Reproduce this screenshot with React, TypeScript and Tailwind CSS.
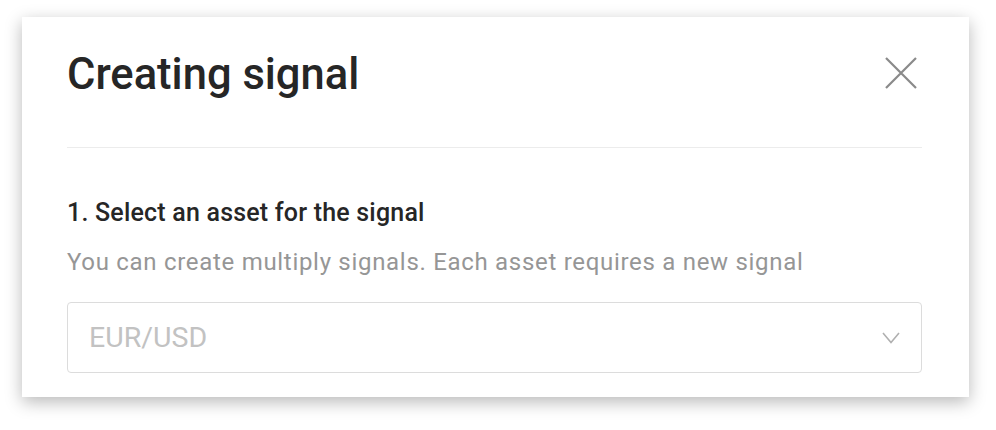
const Close = () => (
  <svg width="34" height="34" viewBox="0 0 34 34" fill="none" stroke="#8a8a8a" strokeWidth="2.2">
    <path d="M2 2 L32 32 M32 2 L2 32" />
  </svg>
);

const Chevron = () => (
  <svg width="18" height="12" viewBox="0 0 18 12" fill="none" stroke="#b0b0b0" strokeWidth="1.6">
    <path d="M1 1 L9 10.5 L17 1" />
  </svg>
);

export default function App() {
  return (
    <div className="min-h-[430px] w-[996px] bg-white pl-[22px] pt-[17px] font-['Roboto',sans-serif]">
      <div className="w-[947px] h-[380px] bg-white shadow-[0_5px_16px_rgba(0,0,0,0.28)] pl-[45px] pr-[47px] pt-[32px] pb-[24px] flex flex-col">
        {/* Header */}
        <div className="flex items-start justify-between">
          <h2 className="text-[43.5px] leading-[52px] font-medium text-[#262626]">Creating signal</h2>
          <button className="mt-[7px] mr-[4px]">
            <Close />
          </button>
        </div>

        <div className="mt-[46px] h-px bg-[#ececec]" />

        <div className="mt-[51px]">
          <p className="text-[25px] leading-[28px] font-medium tracking-[0.2px] text-[#262626]">
            1. Select an asset for the signal
          </p>
          <p className="mt-[21px] text-[24px] leading-[28px] tracking-[0.7px] text-[#969696]">
            You can create multiply signals. Each asset requires a new signal
          </p>
        </div>

        <div className="mt-[26px] h-[71px] border border-[#dcdcdc] rounded-[4px] flex items-center justify-between pl-[21px] pr-[21px]">
          <span className="text-[28.5px] leading-[32px] text-[#c2c2c2]">EUR/USD</span>
          <Chevron />
        </div>
      </div>
    </div>
  );
}
